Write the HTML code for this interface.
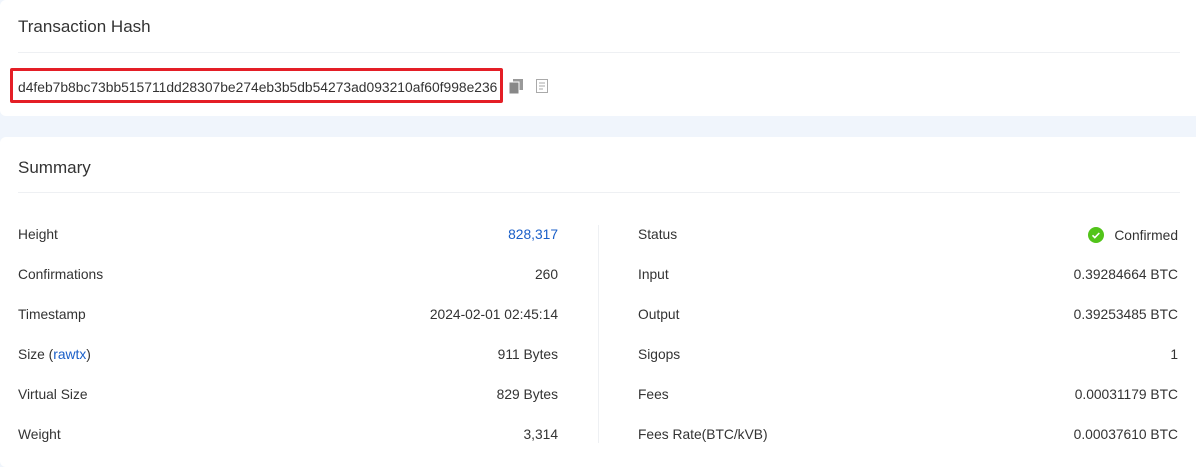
<!DOCTYPE html>
<html><head><meta charset="utf-8"><style>
*{margin:0;padding:0;box-sizing:border-box}
body{width:1196px;height:454px;background:#f0f5fc;font-family:"Liberation Sans",sans-serif;color:#333;overflow:hidden;position:relative}
.card{position:absolute;left:0;width:1210px;background:#fff;border-radius:6px}
.h{position:absolute;left:18px;font-size:17px;color:#333}
.line{position:absolute;left:18px;right:30px;height:1px;background:#eef0f3}
.t{position:absolute;font-size:13.8px;color:#333;line-height:16px}
.r{text-align:right}
a{color:#1a5fc8;text-decoration:none}
</style></head><body>
<div class="card" style="top:0;height:116px">
 <div class="h" style="top:17px">Transaction Hash</div>
 <div class="line" style="top:52px"></div>
 <div style="position:absolute;left:10px;top:68px;width:493px;height:35px;border:3px solid #e41e26;border-radius:2px"></div>
 <div class="t" style="left:18px;top:79px;font-size:13.85px">d4feb7b8bc73bb515711dd28307be274eb3b5db54273ad093210af60f998e236</div>
 <svg style="position:absolute;left:508px;top:78px" width="16" height="16"><rect x="5" y="1" width="10" height="11" fill="#999"/><rect x="1" y="4" width="10" height="12" fill="#888" stroke="#fff" stroke-width="1"/></svg>
 <svg style="position:absolute;left:534px;top:78px" width="16" height="16"><rect x="2.5" y="1.5" width="11" height="13" fill="none" stroke="#aaa"/><path d="M5 5h6M5 8h6M5 11h4" stroke="#aaa"/></svg>
</div>
<div class="card" style="top:137px;height:330px">
 <div class="h" style="top:21px">Summary</div>
 <div class="line" style="top:55px"></div>
 <div style="position:absolute;left:598px;top:88px;width:1px;height:218px;background:#eef0f3"></div>
</div>
<div class="t" style="left:18px;top:227px">Height</div><div class="t r" style="right:638px;top:227px"><a>828,317</a></div>
<div class="t" style="left:18px;top:267px">Confirmations</div><div class="t r" style="right:638px;top:267px">260</div>
<div class="t" style="left:18px;top:307px">Timestamp</div><div class="t r" style="right:638px;top:307px">2024-02-01 02:45:14</div>
<div class="t" style="left:18px;top:347px">Size (<a>rawtx</a>)</div><div class="t r" style="right:638px;top:347px">911 Bytes</div>
<div class="t" style="left:18px;top:387px">Virtual Size</div><div class="t r" style="right:638px;top:387px">829 Bytes</div>
<div class="t" style="left:18px;top:427px">Weight</div><div class="t r" style="right:638px;top:427px">3,314</div>
<div class="t" style="left:638px;top:227px">Status</div><div class="t r" style="right:18px;top:227px"><svg width="16" height="16" style="vertical-align:-3px;margin-right:10px"><circle cx="8" cy="8" r="8" fill="#52c41a"/><path d="M4.5 8.3l2.3 2.3 4.5-4.6" stroke="#fff" stroke-width="1.6" fill="none"/></svg>Confirmed</div>
<div class="t" style="left:638px;top:267px">Input</div><div class="t r" style="right:18px;top:267px">0.39284664 BTC</div>
<div class="t" style="left:638px;top:307px">Output</div><div class="t r" style="right:18px;top:307px">0.39253485 BTC</div>
<div class="t" style="left:638px;top:347px">Sigops</div><div class="t r" style="right:18px;top:347px">1</div>
<div class="t" style="left:638px;top:387px">Fees</div><div class="t r" style="right:18px;top:387px">0.00031179 BTC</div>
<div class="t" style="left:638px;top:427px">Fees Rate(BTC/kVB)</div><div class="t r" style="right:18px;top:427px">0.00037610 BTC</div>
</body></html>
